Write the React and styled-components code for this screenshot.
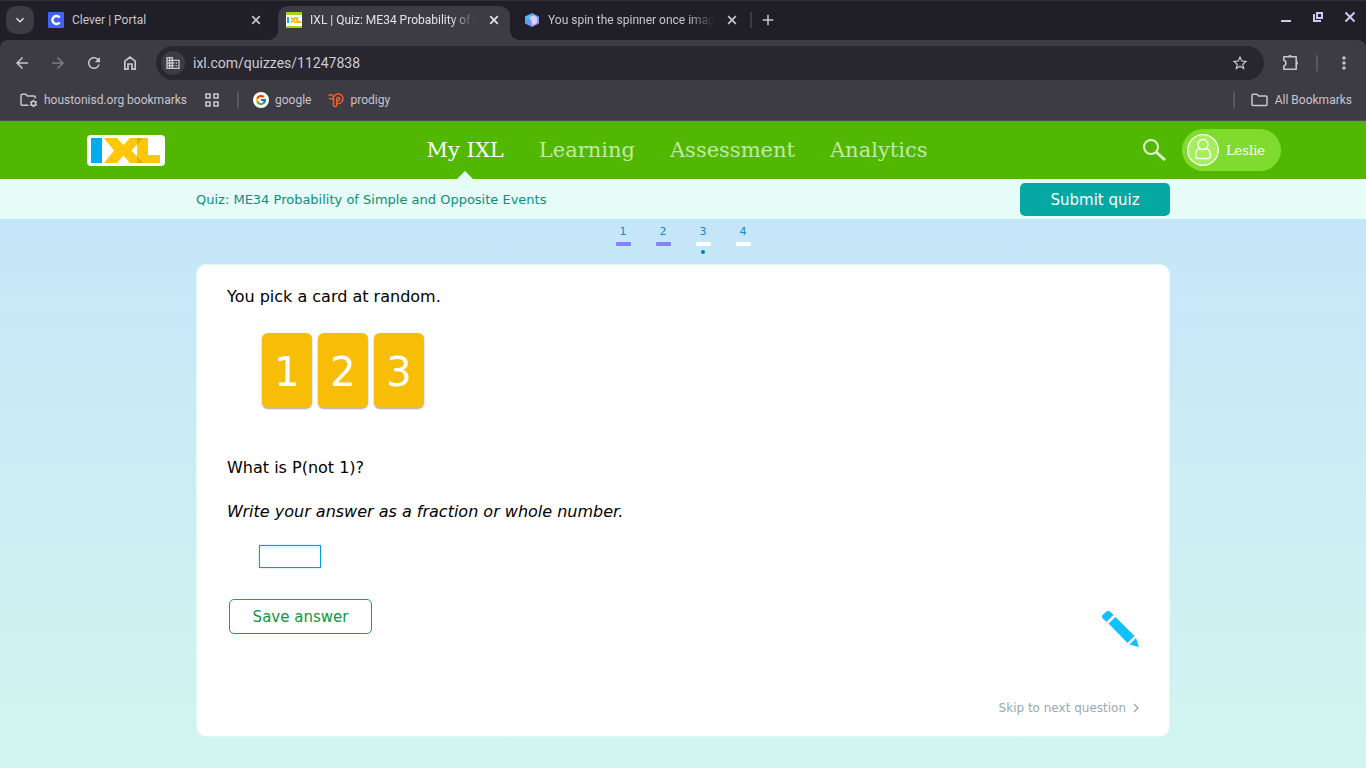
import React from "react";
import styled, { createGlobalStyle, css } from "styled-components";
import {
  MdArrowBack, MdArrowForward, MdRefresh, MdStarBorder,
  MdMoreVert, MdAdd, MdKeyboardArrowDown, MdDomain,
} from "react-icons/md";
import { FcGoogle } from "react-icons/fc";

const ui = `Roboto, "Liberation Sans", sans-serif`;
const verdana = `Verdana, "DejaVu Sans", sans-serif`;
const slab = `"Roboto Slab", "DejaVu Serif", serif`;

const GlobalStyle = createGlobalStyle`
  *, *::before, *::after { box-sizing: border-box; }
  html, body { margin: 0; }
  body { font-family: ${verdana}; background: #d1f6ef; }
  button { padding: 0; border: 0; background: none; color: inherit; font: inherit; cursor: pointer; }
  a { color: inherit; text-decoration: none; }
  svg { display: block; flex: none; }
`;

const Page = styled.div`
  min-height: 100vh;
  display: flex;
  flex-direction: column;
`;

/* Browser chrome */
const Chrome = styled.div`
  background: #201e27;
  color: #c9c5d0;
  font-family: ${ui};
  font-size: 12px;
`;

const TabStrip = styled.div`
  height: 40px;
  display: flex;
  align-items: stretch;
  gap: 6px;
  padding: 0 0 0 6px;
  border-top: 1px solid #312f38;
`;

const TabSearch = styled.button`
  width: 28px;
  height: 28px;
  margin-top: 5px;
  display: grid;
  place-items: center;
  border-radius: 10px;
  background: #3d3b43;
  color: #e6e1ee;
`;

const Tab = styled.div`
  position: relative;
  flex: 0 1 232px;
  min-width: 0;
  margin-top: 5px;
  height: 28px;
  display: flex;
  align-items: center;
  gap: 8px;
  padding: 0 8px;
  ${(p) => p.$active && css`
    color: #e6e1e9;
    background: #3d3b43;
    border-radius: 10px 10px 0 0;
    &::before, &::after {
      content: "";
      position: absolute;
      bottom: 0;
      width: 10px;
      height: 10px;
    }
    &::before { right: 100%; background: radial-gradient(circle at 0 0, transparent 10px, #3d3b43 10px); }
    &::after { left: 100%; background: radial-gradient(circle at 100% 0, transparent 10px, #3d3b43 10px); }
    height: 34px;
    padding-bottom: 6px;
  `}
`;

const TabTitle = styled.span`
  flex: 1;
  min-width: 0;
  overflow: hidden;
  white-space: nowrap;
  line-height: 16px;
  ${(p) => p.$fade && css`mask-image: linear-gradient(to right, #000 calc(100% - 28px), transparent calc(100% - 2px));`}
`;

const TabClose = styled.button`
  width: 16px;
  height: 16px;
  display: grid;
  place-items: center;
`;

const StripDivider = styled.span`
  width: 2px;
  height: 16px;
  margin: 11px 0 0 -4px;
  background: #3d3b43;
`;

const NewTab = styled.button`
  width: 20px;
  height: 28px;
  margin-top: 5px;
  display: grid;
  place-items: center;
`;

const WindowButtons = styled.div`
  height: 32px;
  margin-left: auto;
  padding-right: 10px;
  display: flex;
  align-items: center;
  gap: 20px;
  color: #d0c8f0;
`;

const WindowButton = styled.button`
  width: 12px;
  height: 12px;
`;

const Toolbar = styled.div`
  height: 46px;
  display: flex;
  align-items: center;
  padding: 0 12px;
  background: #3d3b43;
  border-radius: 8px 8px 0 0;
`;

const NavButtons = styled.div`
  display: flex;
  gap: 16px;
  margin-right: 16px;
`;

const IconButton = styled.button`
  width: 20px;
  height: 20px;
  display: grid;
  place-items: center;
  opacity: ${(p) => (p.disabled ? 0.45 : 1)};
`;

const Omnibox = styled.div`
  flex: 1;
  height: 34px;
  display: flex;
  align-items: center;
  padding: 0 14px 0 5px;
  border-radius: 17px;
  background: #28262e;
`;

const SiteInfo = styled.button`
  width: 24px;
  height: 24px;
  display: grid;
  place-items: center;
  border-radius: 50%;
  background: #3d3b43;
`;

const Address = styled.input`
  flex: 1;
  min-width: 0;
  padding: 0 8px;
  border: 0;
  outline: 0;
  background: none;
  color: #d0ccd5;
  font: 14px ${ui};
`;

const ToolbarRight = styled.div`
  display: flex;
  align-items: center;
  gap: 16px;
  margin-left: 16px;
`;

const Divider = styled.span`
  width: 2px;
  height: 16px;
  background: #59565f;
`;

const Bookmarks = styled.div`
  height: 35px;
  display: flex;
  align-items: center;
  padding: 0 14px 7px 20px;
  background: #3d3b43;
  border-bottom: 1px solid #4f4c54;
`;

const BookmarkLink = styled.a`
  display: flex;
  align-items: center;
  gap: 6px;
  margin-right: 17px;
  line-height: 16px;
  white-space: nowrap;
  &:last-child { margin: 0 0 0 16px; }
`;

const BookmarkDivider = styled(Divider)`
  margin-right: 14px;
  &:nth-last-child(2) { margin: 0 0 0 auto; }
`;

/* Site header */
const Header = styled.header`
  background: #52b700;
`;

const HeaderInner = styled.div`
  max-width: 1196px;
  height: 58px;
  margin: 0 auto;
  padding-left: 2px;
  display: grid;
  grid-template-columns: 1fr auto 1fr;
  align-items: center;
`;

const MainNav = styled.nav`
  height: 100%;
  display: flex;
  gap: 35px;
  margin-right: 14px;
  font-family: ${slab};
  font-weight: 300;
  font-size: 21px;
`;

const MainLink = styled.a`
  position: relative;
  line-height: 58px;
  color: ${(p) => (p.$active ? "#ffffff" : "#c3e9a5")};
  ${(p) => p.$active && css`
    &::after {
      content: "";
      position: absolute;
      left: calc(50% - 8px);
      bottom: 0;
      border: 8px solid transparent;
      border-top: 0;
      border-bottom-color: #e5fcf8;
    }
  `}
`;

const Account = styled.div`
  display: flex;
  align-items: center;
  justify-content: flex-end;
  gap: 16px;
`;

const UserButton = styled.button`
  height: 42px;
  display: flex;
  align-items: center;
  gap: 7px;
  padding: 0 16px 0 5px;
  border-radius: 21px;
  background: #7fdc2f;
  color: #ffffff;
  font-family: ${slab};
  font-size: 13px;
`;

const SubHeader = styled.div`
  background: #e5fcf8;
`;

const SubInner = styled.div`
  max-width: 974px;
  height: 40px;
  margin: 0 auto;
  display: flex;
  align-items: center;
  justify-content: space-between;
`;

const QuizTitle = styled.h1`
  margin: 0;
  font-size: 13px;
  font-weight: 400;
  color: #0f8c7d;
`;

const SubmitButton = styled.button`
  width: 150px;
  height: 33px;
  padding-top: 1px;
  border-radius: 5px;
  background: #06a8a3;
  color: #ffffff;
  font-size: 15px;
`;

const Practice = styled.main`
  flex: 1;
  padding-bottom: 31px;
  background: linear-gradient(#c5e6f9, #d1f6ef);
`;

const Progress = styled.ol`
  height: 45px;
  margin: 0;
  padding: 6px 0 0;
  display: flex;
  justify-content: center;
  gap: 25px;
  list-style: none;
`;

const Step = styled.li`
  width: 15px;
  display: flex;
  flex-direction: column;
  align-items: center;
  font-size: 11px;
  line-height: 14px;
  color: #1585cc;
  &::before {
    content: "";
    order: 1;
    width: 15px;
    height: 4px;
    margin-top: 3px;
    border-radius: 1px;
    background: ${(p) => (p.$done ? "#8582f6" : "#ffffff")};
  }
  &::after {
    content: "";
    order: 2;
    width: 4px;
    height: 4px;
    margin-top: 4px;
    border-radius: 50%;
    background: ${(p) => (p.$current ? "#0a7cc4" : "transparent")};
  }
`;

const Question = styled.section`
  max-width: 974px;
  min-height: 473px;
  margin: 0 auto;
  padding: 20px 30px 19px;
  display: flex;
  flex-direction: column;
  align-items: flex-start;
  border: 1px solid #e0faec;
  border-radius: 10px;
  background: #ffffff;
  color: #000000;
  font-size: 16px;
`;

const Text = styled.p`
  margin: 0 0 20px;
  line-height: 24px;
  font-style: ${(p) => (p.$italic ? "italic" : "normal")};
`;

const Cards = styled.div`
  display: flex;
  gap: 6px;
  margin: 4px 35px 48px;
`;

const Card = styled.div`
  width: 50px;
  height: 75px;
  border-radius: 6px;
  background: #f8bd07;
  box-shadow: 0 1px 2px rgba(0, 0, 0, 0.35);
  color: #ffffff;
  font-size: 40px;
  line-height: 79px;
  text-align: center;
`;

const Answer = styled.input`
  width: 62px;
  height: 23px;
  margin: 1px 32px 31px;
  padding: 0 4px;
  border: 1px solid #0a98e4;
  border-radius: 0;
  outline: 0;
  background: #ffffff;
  box-shadow: 0 0 2px #a9dcf6, inset 0 3px 0 #eaf6fd;
  font: 16px ${verdana};
`;

const SaveButton = styled.button`
  width: 143px;
  height: 35px;
  margin-left: 2px;
  border: 1px solid #1ea04c;
  border-radius: 5px;
  color: #0f9640;
  font-size: 15px;
`;

const Tools = styled.div`
  width: 100%;
  flex: 1;
  display: flex;
  flex-direction: column;
  align-items: flex-end;
  justify-content: space-between;
`;

const PencilButton = styled.button`
  margin-top: -24px;
`;

const Skip = styled.a`
  display: flex;
  align-items: center;
  gap: 7px;
  font-size: 12px;
  line-height: 18px;
  color: #98a9b3;
`;

const CloseIcon = () => (
  <svg width="10" height="10" viewBox="0 0 10 10" stroke="currentColor" strokeWidth="1.7">
    <path d="M1.2 1.2L8.8 8.8M8.8 1.2L1.2 8.8" />
  </svg>
);

const FolderIcon = ({ gear }) => (
  <svg width="18" height="16" viewBox="0 0 18 16" fill="none" stroke="currentColor" strokeWidth="1.5">
    {gear ? (
      <>
        <path d="M8.5 13.2H2.2A1.2 1.2 0 0 1 1 12V3.5A1.2 1.2 0 0 1 2.2 2.3H5.7L7.2 4H14A1.2 1.2 0 0 1 15.2 5.2V6.5" />
        <circle cx="13.5" cy="11.5" r="2.2" />
        <path d="M13.5 7.7v1.6M13.5 13.7v1.6M10.2 9.6l1.4.8M15.4 12.6l1.4.8M10.2 13.4l1.4-.8M15.4 10.4l1.4-.8" />
      </>
    ) : (
      <path d="M1 3.5A1.2 1.2 0 0 1 2.2 2.3H6L7.5 4H14.8A1.2 1.2 0 0 1 16 5.2V12.3A1.2 1.2 0 0 1 14.8 13.5H2.2A1.2 1.2 0 0 1 1 12.3Z" />
    )}
  </svg>
);

const HomeIcon = () => (
  <svg width="20" height="20" viewBox="0 0 20 20" fill="none" stroke="currentColor" strokeWidth="1.7">
    <path d="M4.8 8.2L10 4.1L15.2 8.2V16.2H12V11H8V16.2H4.8Z" />
  </svg>
);

const PuzzleIcon = () => (
  <svg width="20" height="20" viewBox="0 0 20 20">
    <path d="M3.8 3.8H16.2V16.2H3.8V13C6.6 12.6 6.6 7.6 3.8 7.2Z" fill="none" stroke="currentColor" strokeWidth="1.6" strokeLinejoin="round" />
    <path d="M8.2 3.2A1.9 1.9 0 0 1 11.8 3.2ZM16.8 8.2A1.9 1.9 0 0 1 16.8 11.8Z" fill="currentColor" />
  </svg>
);

const CleverIcon = () => (
  <svg width="16" height="16" viewBox="0 0 16 16">
    <rect width="16" height="16" rx="1" fill="#4262f5" />
    <path d="M11.6 5.6A4 4 0 1 0 11.6 10.4" fill="none" stroke="#fff" strokeWidth="2.4" />
  </svg>
);

const IxlMark = () => (
  <>
    <rect x="4" y="3" width="11" height="25" fill="#00aeef" />
    <path d="M17 3H30L36.5 10L43 3H56L44.5 15.5L56 28H43L36.5 20.5L30 28H17L27 15.5Z" fill="#ffc60b" />
    <path d="M50 3H61V20H73V28H50Z" fill="#ffc60b" />
    <path d="M50 3H56L50 9.5ZM50 21.5L56 28H50Z" fill="#e3ab04" />
  </>
);

const IxlIcon = () => (
  <svg width="16" height="16" viewBox="0 0 16 16">
    <rect width="16" height="16" fill="#fff" />
    <rect width="16" height="3" fill="#a5d616" />
    <rect y="14" width="16" height="2" fill="#a5d616" />
    <rect x="1" y="5" width="2" height="6" fill="#1ca9e0" />
    <path d="M5 5.5L9.5 10.5M9.5 5.5L5 10.5M11.2 5V10H15" fill="none" stroke="#f9b807" strokeWidth="2" />
  </svg>
);

const GemIcon = () => (
  <svg width="16" height="16" viewBox="0 0 16 16">
    <defs>
      <linearGradient id="gem" x1="0" y1="0" x2="1" y2="1">
        <stop offset="0" stopColor="#17f0d0" />
        <stop offset="0.4" stopColor="#5b9cff" />
        <stop offset="1" stopColor="#c47cf0" />
      </linearGradient>
    </defs>
    <path d="M8 1L15 4.5V11.5L8 15L1 11.5V4.5Z" fill="url(#gem)" />
    <path d="M5 5.5L10 3L13 5.5V11L8.5 13.5L7 8Z" fill="#ead9ff" opacity="0.85" />
  </svg>
);

const ProdigyIcon = () => (
  <svg width="16" height="16" viewBox="0 0 16 16" fill="none" stroke="#f2602a" strokeWidth="1.5" strokeLinecap="round">
    <path d="M1 3C3.5 2 5.5 3.5 5.5 6V13A1.6 1.6 0 0 0 8.7 13V7A1.5 1.5 0 1 1 10.2 8.5H9M5.5 5.5A4.8 4.8 0 1 1 10 11.6M1.5 6.3C3 7.3 4.5 7 5.5 6" />
  </svg>
);

const tabs = [
  { title: "Clever | Portal", icon: <CleverIcon /> },
  { title: "IXL | Quiz: ME34 Probability of S", icon: <IxlIcon />, active: true, fade: true },
  { title: "You spin the spinner once imag", icon: <GemIcon />, fade: true },
];

export default function App() {
  return (
    <Page>
      <GlobalStyle />
      <Chrome>
        <TabStrip>
          <TabSearch aria-label="Search tabs"><MdKeyboardArrowDown size={16} /></TabSearch>
          {tabs.map((t) => (
            <Tab key={t.title} $active={t.active}>
              {t.icon}
              <TabTitle $fade={t.fade}>{t.title}</TabTitle>
              <TabClose aria-label={`Close ${t.title}`}><CloseIcon /></TabClose>
            </Tab>
          ))}
          <StripDivider />
          <NewTab aria-label="New tab"><MdAdd size={18} /></NewTab>
          <WindowButtons>
            <WindowButton aria-label="Minimize">
              <svg width="12" height="12" viewBox="0 0 12 12"><rect x="1" y="9" width="10" height="2" fill="currentColor" /></svg>
            </WindowButton>
            <WindowButton aria-label="Restore">
              <svg width="12" height="12" viewBox="0 0 12 12" fill="none" stroke="currentColor" strokeWidth="2">
                <path d="M5 2H10V7H5ZM2 3V10H9" />
              </svg>
            </WindowButton>
            <WindowButton aria-label="Close window">
              <svg width="12" height="12" viewBox="0 0 12 12" stroke="currentColor" strokeWidth="2"><path d="M1.5 1.5L10.5 10.5M10.5 1.5L1.5 10.5" /></svg>
            </WindowButton>
          </WindowButtons>
        </TabStrip>
        <Toolbar>
          <NavButtons>
            <IconButton aria-label="Back"><MdArrowBack size={18} /></IconButton>
            <IconButton aria-label="Forward" disabled><MdArrowForward size={18} /></IconButton>
            <IconButton aria-label="Reload"><MdRefresh size={18} /></IconButton>
            <IconButton aria-label="Home"><HomeIcon /></IconButton>
          </NavButtons>
          <Omnibox>
            <SiteInfo aria-label="Site information"><MdDomain size={16} /></SiteInfo>
            <Address aria-label="Address" defaultValue="ixl.com/quizzes/11247838" />
            <IconButton aria-label="Bookmark this tab"><MdStarBorder size={18} /></IconButton>
          </Omnibox>
          <ToolbarRight>
            <IconButton aria-label="Extensions"><PuzzleIcon /></IconButton>
            <Divider />
            <IconButton aria-label="Menu"><MdMoreVert size={20} /></IconButton>
          </ToolbarRight>
        </Toolbar>
        <Bookmarks>
          <BookmarkLink href="#houstonisd"><FolderIcon gear />houstonisd.org bookmarks</BookmarkLink>
          <BookmarkLink href="#apps" aria-label="Apps">
            <svg width="16" height="16" viewBox="0 0 16 16" fill="none" stroke="currentColor" strokeWidth="1.6">
              <path d="M2 2H6V6H2ZM10 2H14V6H10ZM2 10H6V14H2ZM10 10H14V14H10Z" />
            </svg>
          </BookmarkLink>
          <BookmarkDivider />
          <BookmarkLink href="#google">
            <svg width="16" height="16" viewBox="0 0 16 16">
              <circle cx="8" cy="8" r="8" fill="#fff" />
              <FcGoogle x="2" y="2" size={12} />
            </svg>
            google
          </BookmarkLink>
          <BookmarkLink href="#prodigy"><ProdigyIcon />prodigy</BookmarkLink>
          <BookmarkDivider />
          <BookmarkLink href="#all"><FolderIcon />All Bookmarks</BookmarkLink>
        </Bookmarks>
      </Chrome>

      <Header>
        <HeaderInner>
          <a href="#home" aria-label="IXL home">
            <svg width="78" height="31" viewBox="0 0 78 31">
              <rect width="78" height="31" rx="4" fill="#fff" />
              <IxlMark />
            </svg>
          </a>
          <MainNav>
            <MainLink href="#my" $active>My IXL</MainLink>
            <MainLink href="#learning">Learning</MainLink>
            <MainLink href="#assessment">Assessment</MainLink>
            <MainLink href="#analytics">Analytics</MainLink>
          </MainNav>
          <Account>
            <button aria-label="Search">
              <svg width="24" height="24" viewBox="0 0 24 24" fill="none" stroke="#dff3cf">
                <circle cx="9" cy="9" r="7" strokeWidth="2" />
                <path d="M14 14L23 22" strokeWidth="3" />
              </svg>
            </button>
            <UserButton>
              <svg width="32" height="32" viewBox="0 0 32 32" fill="none" stroke="#fff" strokeWidth="1.3">
                <circle cx="16" cy="16" r="15.3" fill="#a5ee5c" />
                <circle cx="16" cy="10.5" r="5" />
                <path d="M12.8 14.8C10 15.2 8.7 17 8.7 20V22.5C8.7 24 9.4 24.5 10.6 24.5H21.4C22.6 24.5 23.3 24 23.3 22.5V20C23.3 17 22 15.2 19.2 14.8" />
              </svg>
              Leslie
            </UserButton>
          </Account>
        </HeaderInner>
      </Header>

      <SubHeader>
        <SubInner>
          <QuizTitle>Quiz: ME34 Probability of Simple and Opposite Events</QuizTitle>
          <SubmitButton>Submit quiz</SubmitButton>
        </SubInner>
      </SubHeader>

      <Practice>
        <Progress>
          <Step $done>1</Step>
          <Step $done>2</Step>
          <Step $current>3</Step>
          <Step>4</Step>
        </Progress>
        <Question>
          <Text>You pick a card at random.</Text>
          <Cards>
            <Card>1</Card>
            <Card>2</Card>
            <Card>3</Card>
          </Cards>
          <Text>What is P(not 1)?</Text>
          <Text $italic>Write your answer as a fraction or whole number.</Text>
          <Answer aria-label="Your answer" />
          <SaveButton>Save answer</SaveButton>
          <Tools>
            <PencilButton aria-label="Scratchpad">
              <svg width="38" height="38" viewBox="0 0 38 38" fill="#12bfff">
                <path d="M1.6 5L5.4 1.6C6.4.8 8 .8 9 1.6L12.5 4.8L5.5 12L2 8.8C.8 7.6.6 6 1.6 5Z" />
                <path d="M7.5 13.5L14.5 7L33.5 26L26.5 33Z" />
                <path d="M28.5 34.5L35 28L38 37Z" />
              </svg>
            </PencilButton>
            <Skip href="#next">
              Skip to next question
              <svg width="6" height="10" viewBox="0 0 6 10" fill="none" stroke="currentColor" strokeWidth="1.4"><path d="M1 1L5 5L1 9" /></svg>
            </Skip>
          </Tools>
        </Question>
      </Practice>
    </Page>
  );
}
